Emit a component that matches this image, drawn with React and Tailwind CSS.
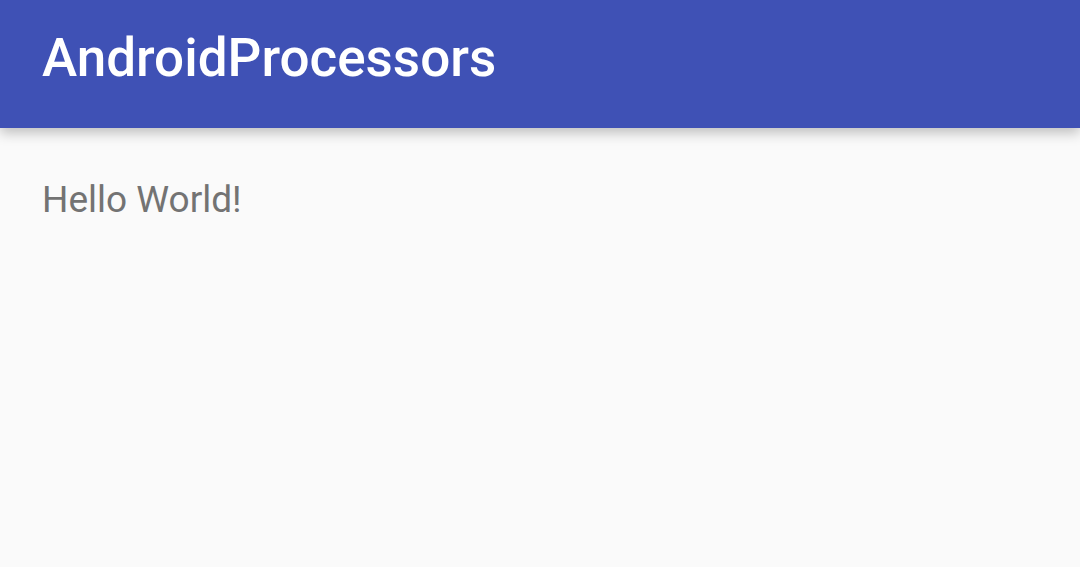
export default function App() {
  return (
    <div className="flex h-[567px] w-full flex-col bg-[#fafafa] font-['Roboto',sans-serif]">
      <header className="relative z-10 h-[128px] shrink-0 bg-[#3f51b5] px-[42px] pt-[32px] shadow-[0_5px_12px_rgba(0,0,0,0.24)]">
        <h1 className="text-[53px] font-medium leading-none text-white">AndroidProcessors</h1>
      </header>
      <main className="px-[42px] pt-[53px]">
        <p className="text-[37px] leading-none text-[#737373]">Hello World!</p>
      </main>
    </div>
  );
}
